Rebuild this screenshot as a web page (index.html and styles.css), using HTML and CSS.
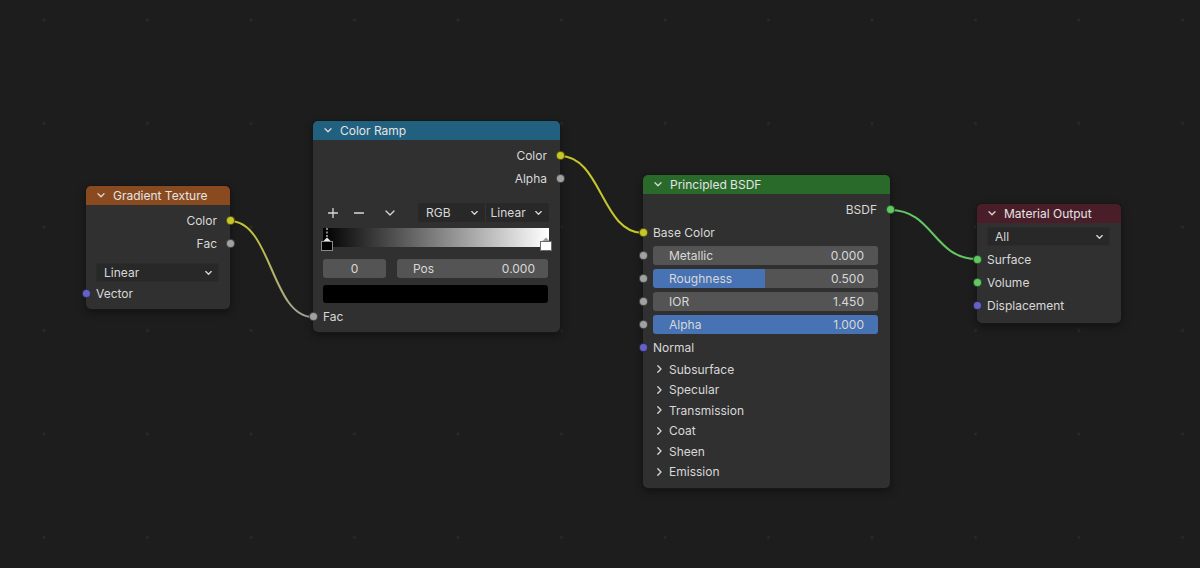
FILE: index.html
```html
<!DOCTYPE html>
<html lang="en">

<head>
    <meta charset="UTF-8">
    <meta name="viewport" content="width=device-width, initial-scale=1.0">
    <title>Shader Editor</title>
    <link rel="stylesheet" href="styles.css">
</head>

<body>
    <div class="editor">
        <!-- links are drawn under the nodes -->
        <svg class="links" width="1200" height="568" viewBox="0 0 1200 568">
            <defs>
                <linearGradient id="link-fac" gradientUnits="userSpaceOnUse" x1="230" y1="221" x2="313" y2="317">
                    <stop offset="0" stop-color="#c7c729" />
                    <stop offset="1" stop-color="#a1a1a1" />
                </linearGradient>
            </defs>
            <path d="M230 221 C271.5 221 271.5 317 313 317" stroke="url(#link-fac)" />
            <path d="M560 156 C601.5 156 601.5 233 643 233" stroke="#c7c729" />
            <path d="M890 210 C933.5 210 933.5 259 977 259" stroke="#63c763" />
        </svg>

        <!-- Gradient Texture -->
        <div class="node node-gradient">
            <div class="node-head head-texture">
                <svg class="caret" width="8" height="5" viewBox="0 0 8 5"><path d="M1 0.8l3 3 3-3" /></svg>
                <span>Gradient Texture</span>
            </div>
            <div class="node-body">
                <div class="row row-out">Color<span class="socket sock-color"></span></div>
                <div class="row row-out">Fac<span class="socket sock-float"></span></div>
                <div class="dropdown drop-gradient">
                    <span>Linear</span>
                    <svg class="drop-caret" width="7" height="4" viewBox="0 0 7 4"><path d="M0.8 0.5l2.7 2.7 2.7-2.7" /></svg>
                </div>
                <div class="row row-in"><span class="socket sock-vector"></span>Vector</div>
            </div>
        </div>

        <!-- Color Ramp -->
        <div class="node node-ramp">
            <div class="node-head head-converter">
                <svg class="caret" width="8" height="5" viewBox="0 0 8 5"><path d="M1 0.8l3 3 3-3" /></svg>
                <span>Color Ramp</span>
            </div>
            <div class="node-body">
                <div class="row row-out">Color<span class="socket sock-color"></span></div>
                <div class="row row-out">Alpha<span class="socket sock-float"></span></div>
                <div class="ramp-tools">
                    <svg class="tool tool-add" width="10" height="10" viewBox="0 0 10 10"><path d="M5 0.5v9M0.5 5h9" /></svg>
                    <svg class="tool tool-remove" width="10" height="10" viewBox="0 0 10 10"><path d="M0.5 5h9" /></svg>
                    <svg class="tool tool-menu" width="10" height="6" viewBox="0 0 10 6"><path d="M1 1l4 4 4-4" /></svg>
                    <div class="split-drop">
                        <div class="split-item">
                            <span>RGB</span>
                            <svg class="drop-caret" width="7" height="4" viewBox="0 0 7 4"><path d="M0.8 0.5l2.7 2.7 2.7-2.7" /></svg>
                        </div>
                        <div class="split-item">
                            <span>Linear</span>
                            <svg class="drop-caret" width="7" height="4" viewBox="0 0 7 4"><path d="M0.8 0.5l2.7 2.7 2.7-2.7" /></svg>
                        </div>
                    </div>
                </div>
                <div class="ramp-bar">
                    <svg class="stop stop-active" width="12" height="24" viewBox="0 0 12 24">
                        <path class="stop-line" d="M6 0v10" />
                        <path class="stop-tip" d="M1.5 14l4.5-4.5 4.5 4.5z" />
                        <rect x="0.5" y="13.5" width="11" height="9" fill="#000" stroke="#8a8a8a" />
                    </svg>
                    <svg class="stop stop-end" width="12" height="24" viewBox="0 0 12 24">
                        <path d="M1.5 14l4.5-4.5 4.5 4.5z" fill="#9a9a9a" />
                        <rect x="0.5" y="13.5" width="11" height="9" fill="#fff" stroke="#6a6a6a" />
                    </svg>
                </div>
                <div class="ramp-fields">
                    <div class="field field-index">0</div>
                    <div class="field field-pos"><span>Pos</span><span>0.000</span></div>
                </div>
                <div class="swatch"></div>
                <div class="row row-in row-fac"><span class="socket sock-float"></span>Fac</div>
            </div>
        </div>

        <!-- Principled BSDF -->
        <div class="node node-bsdf">
            <div class="node-head head-shader">
                <svg class="caret" width="8" height="5" viewBox="0 0 8 5"><path d="M1 0.8l3 3 3-3" /></svg>
                <span>Principled BSDF</span>
            </div>
            <div class="node-body">
                <div class="row row-out">BSDF<span class="socket sock-shader"></span></div>
                <div class="row row-in"><span class="socket sock-color"></span>Base Color</div>
                <div class="row row-slider">
                    <span class="socket sock-float"></span>
                    <div class="slider" style="--fill: 0%"><span>Metallic</span><span>0.000</span></div>
                </div>
                <div class="row row-slider">
                    <span class="socket sock-float"></span>
                    <div class="slider" style="--fill: 50%"><span>Roughness</span><span>0.500</span></div>
                </div>
                <div class="row row-slider">
                    <span class="socket sock-float"></span>
                    <div class="slider" style="--fill: 0%"><span>IOR</span><span>1.450</span></div>
                </div>
                <div class="row row-slider">
                    <span class="socket sock-float"></span>
                    <div class="slider" style="--fill: 100%"><span>Alpha</span><span>1.000</span></div>
                </div>
                <div class="row row-in"><span class="socket sock-vector"></span>Normal</div>
                <div class="panels">
                    <div class="panel"><svg class="panel-caret" width="5" height="8" viewBox="0 0 5 8"><path d="M0.8 0.8l3.2 3.2-3.2 3.2" /></svg>Subsurface</div>
                    <div class="panel"><svg class="panel-caret" width="5" height="8" viewBox="0 0 5 8"><path d="M0.8 0.8l3.2 3.2-3.2 3.2" /></svg>Specular</div>
                    <div class="panel"><svg class="panel-caret" width="5" height="8" viewBox="0 0 5 8"><path d="M0.8 0.8l3.2 3.2-3.2 3.2" /></svg>Transmission</div>
                    <div class="panel"><svg class="panel-caret" width="5" height="8" viewBox="0 0 5 8"><path d="M0.8 0.8l3.2 3.2-3.2 3.2" /></svg>Coat</div>
                    <div class="panel"><svg class="panel-caret" width="5" height="8" viewBox="0 0 5 8"><path d="M0.8 0.8l3.2 3.2-3.2 3.2" /></svg>Sheen</div>
                    <div class="panel"><svg class="panel-caret" width="5" height="8" viewBox="0 0 5 8"><path d="M0.8 0.8l3.2 3.2-3.2 3.2" /></svg>Emission</div>
                </div>
            </div>
        </div>

        <!-- Material Output -->
        <div class="node node-output">
            <div class="node-head head-output">
                <svg class="caret" width="8" height="5" viewBox="0 0 8 5"><path d="M1 0.8l3 3 3-3" /></svg>
                <span>Material Output</span>
            </div>
            <div class="node-body">
                <div class="dropdown drop-output">
                    <span>All</span>
                    <svg class="drop-caret" width="7" height="4" viewBox="0 0 7 4"><path d="M0.8 0.5l2.7 2.7 2.7-2.7" /></svg>
                </div>
                <div class="row row-in"><span class="socket sock-shader"></span>Surface</div>
                <div class="row row-in"><span class="socket sock-shader"></span>Volume</div>
                <div class="row row-in"><span class="socket sock-vector"></span>Displacement</div>
            </div>
        </div>
    </div>
</body>

</html>
```

FILE: styles.css
```css
* {
    box-sizing: border-box;
}

body {
    margin: 0;
    background: #1d1d1d;
    font-family: "Inter", "DejaVu Sans", sans-serif;
    font-size: 12px;
    color: #d8d8d8;
}

.editor {
    position: relative;
    width: 1200px;
    height: 568px;
    overflow: hidden;
    background-color: #1d1d1d;
    background-image: radial-gradient(circle, #2a2a2a 1.2px, transparent 1.8px);
    background-size: 103.5px 103.5px;
    background-position: -7.75px -31.75px;
}

.links {
    position: absolute;
    left: 0;
    top: 0;
}

.links path {
    fill: none;
    stroke-width: 2;
}

/* nodes */

.node {
    position: absolute;
    background: #303030;
    border-radius: 5px;
    box-shadow: 0 0 0 1px #171717, 0 3px 8px rgba(0, 0, 0, 0.45);
}

.node-gradient {
    left: 86px;
    top: 186px;
    width: 144px;
}

.node-ramp {
    left: 313px;
    top: 121px;
    width: 247px;
}

.node-bsdf {
    left: 643px;
    top: 175px;
    width: 247px;
}

.node-output {
    left: 977px;
    top: 204px;
    width: 144px;
}

.node-head {
    display: flex;
    align-items: center;
    gap: 8px;
    height: 19px;
    padding-left: 11px;
    border-radius: 5px 5px 0 0;
    color: #e4e4e4;
}

.head-texture {
    background: #8a4a1f;
}

.head-converter {
    background: #22607f;
}

.head-shader {
    background: #296a2b;
}

.head-output {
    background: #4a1e29;
}

.caret path,
.drop-caret path,
.panel-caret path,
.tool path {
    fill: none;
    stroke: #d8d8d8;
    stroke-width: 1.3;
    stroke-linecap: round;
    stroke-linejoin: round;
}

.node-body {
    padding: 4px 0 4px;
}

.row {
    position: relative;
    display: flex;
    align-items: center;
    height: 23px;
}

.row-out {
    justify-content: flex-end;
    padding-right: 13px;
}

.row-in {
    padding-left: 10px;
}

/* sockets sit on the node border */

.socket {
    position: absolute;
    top: 7px;
    width: 9px;
    height: 9px;
    border-radius: 50%;
    border: 1px solid rgba(0, 0, 0, 0.55);
}

.row-out .socket {
    right: -4.5px;
}

.row-in .socket,
.row-slider .socket {
    left: -4.5px;
}

.sock-color {
    background: #c7c729;
}

.sock-float {
    background: #a1a1a1;
}

.sock-vector {
    background: #6363c7;
}

.sock-shader {
    background: #63c763;
}

/* widgets */

.dropdown {
    display: flex;
    align-items: center;
    justify-content: space-between;
    height: 19px;
    padding: 0 7px 0 8px;
    border-radius: 3px;
    background: #282828;
    box-shadow: inset 0 0 0 1px #2c2c2c;
}

.drop-gradient {
    margin: 8px 11px 0 10px;
}

.drop-output {
    margin: 0 11px 2px 10px;
}

.ramp-tools {
    display: flex;
    align-items: center;
    height: 19px;
    margin: 13px 11px 0 10px;
}

.tool {
    flex: none;
}

.tool-add {
    margin-left: 5px;
}

.tool-remove {
    margin-left: 16px;
}

.tool-menu {
    margin-left: 21px;
}

.split-drop {
    display: flex;
    margin-left: auto;
    width: 131px;
    height: 19px;
    border-radius: 3px;
    background: #282828;
    overflow: hidden;
}

.split-item {
    display: flex;
    align-items: center;
    justify-content: space-between;
    flex: 1;
    padding: 0 7px 0 8px;
}

.split-item + .split-item {
    border-left: 1px solid #333;
    padding-left: 5px;
}

.ramp-bar {
    position: relative;
    height: 19px;
    margin: 6px 11px 0 10px;
    background: linear-gradient(to right, #000, #fff);
}

.stop {
    position: absolute;
    top: 0;
}

.stop-active {
    left: -2px;
}

.stop-end {
    right: -3px;
}

.stop-line {
    stroke: #fff;
    stroke-width: 1;
    stroke-dasharray: 2 1.5;
}

.stop-tip {
    fill: #eaeaea;
}

.ramp-fields {
    display: flex;
    gap: 11px;
    height: 19px;
    margin: 12px 12px 0 10px;
}

.field {
    display: flex;
    align-items: center;
    height: 19px;
    border-radius: 3px;
    background: #545454;
}

.field-index {
    width: 63px;
    justify-content: center;
}

.field-pos {
    flex: 1;
    justify-content: space-between;
    padding: 0 13px 0 16px;
}

.swatch {
    height: 18px;
    margin: 7px 12px 0 10px;
    border-radius: 3px;
    background: #000;
}

.row-fac {
    margin-top: 2px;
}

.row-slider {
    padding: 0 12px 0 10px;
}

.slider {
    display: flex;
    align-items: center;
    justify-content: space-between;
    width: 100%;
    height: 19px;
    padding: 0 14px 0 16px;
    border-radius: 3px;
    background: linear-gradient(to right, #4772b3 var(--fill), #545454 var(--fill));
}

.panels {
    padding-bottom: 2px;
}

.panel {
    display: flex;
    align-items: center;
    gap: 7px;
    height: 20.5px;
    padding-left: 14px;
}

.node-output .node-body {
    padding-bottom: 6px;
}
```
